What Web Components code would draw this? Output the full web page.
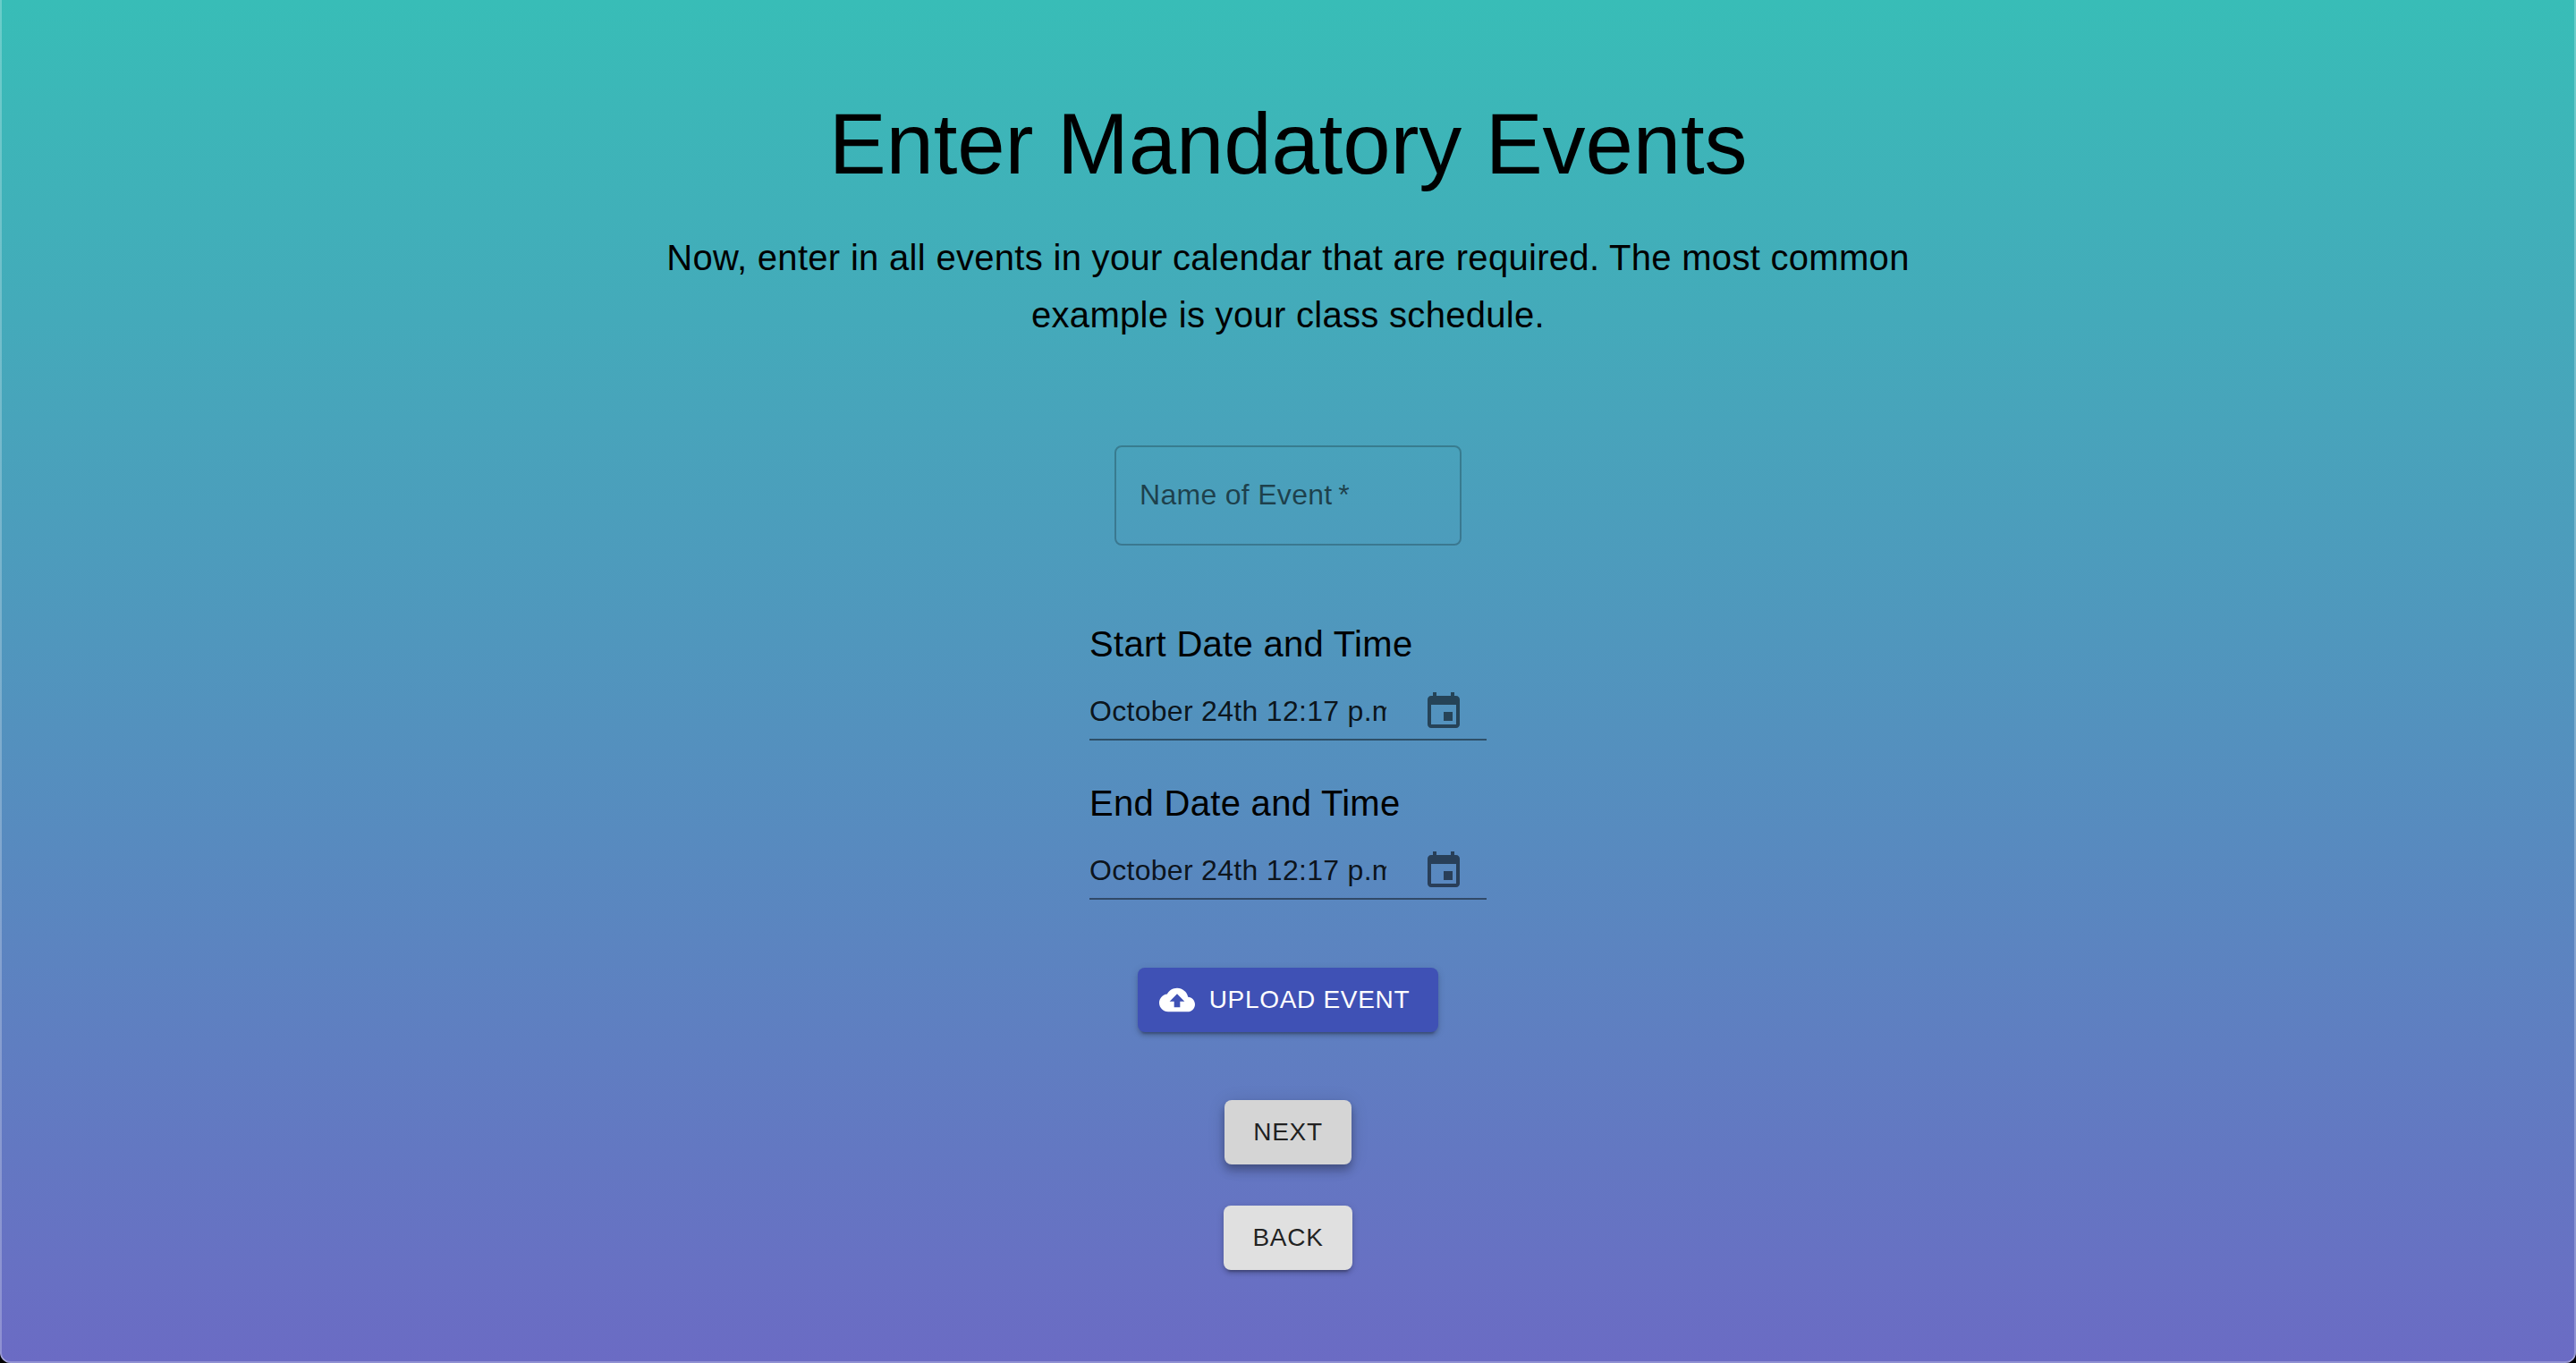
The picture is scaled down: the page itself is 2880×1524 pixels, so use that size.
<!DOCTYPE html>
<html lang="en">
<head>
<meta charset="utf-8">
<title>Enter Mandatory Events</title>
<style>
  html, body { margin: 0; height: 100%; background: #000; }
  body { font-family: "Liberation Sans", Arial, sans-serif; }
</style>
</head>
<body>
<app-page>
  <page-heading>
    <span slot="title">Enter Mandatory Events</span>
    Now, enter in all events in your calendar that are required. The most common<br>example is your class schedule.
  </page-heading>
  <text-field label="Name of Event"></text-field>
  <date-field value="October 24th 12:17 p.m.">Start Date and Time</date-field>
  <date-field class="end" value="October 24th 12:17 p.m.">End Date and Time</date-field>
  <ui-button class="upload" kind="primary"><cloud-icon slot="icon"></cloud-icon>Upload Event</ui-button>
  <ui-button class="next" kind="hover">Next</ui-button>
  <ui-button class="back">Back</ui-button>
</app-page>

<script>
class AppPage extends HTMLElement {
  constructor() {
    super();
    this.attachShadow({ mode: 'open' });
    this.shadowRoot.innerHTML = `
      <style>
        :host {
          display: block;
          height: 1524px;
          box-sizing: border-box;
          border-radius: 0 0 12px 12px;
          background: linear-gradient(180deg, #38bdb7 0%, #6b6bc4 100%);
          box-shadow: inset 2px 0 0 rgba(255,255,255,.25), inset -2px 0 0 rgba(255,255,255,.25), inset 0 -2px 0 rgba(255,255,255,.25);
        }
        main {
          display: flex;
          flex-direction: column;
          align-items: center;
          padding-top: 103px;
        }
        ::slotted(text-field) { margin-top: 114px; }
        ::slotted(date-field) { margin-top: 86px; }
        ::slotted(date-field.end) { margin-top: 46px; }
        ::slotted(ui-button.upload) { margin-top: 76px; }
        ::slotted(ui-button.next) { margin-top: 76px; }
        ::slotted(ui-button.back) { margin-top: 46px; }
      </style>
      <main><slot></slot></main>`;
  }
}

class PageHeading extends HTMLElement {
  constructor() {
    super();
    this.attachShadow({ mode: 'open' });
    this.shadowRoot.innerHTML = `
      <style>
        :host { display: block; text-align: center; color: #000; }
        h1 { margin: 0; font-size: 96px; line-height: 115px; font-weight: 400; letter-spacing: -.15px; }
        p { margin: 38px 0 0; font-size: 40px; line-height: 64px; letter-spacing: .3px; }
      </style>
      <h1><slot name="title"></slot></h1>
      <p><slot></slot></p>`;
  }
}

class TextField extends HTMLElement {
  constructor() {
    super();
    this.attachShadow({ mode: 'open' });
    this.shadowRoot.innerHTML = `
      <style>
        :host { display: block; width: 388px; height: 112px; box-sizing: border-box; }
        div {
          height: 100%;
          box-sizing: border-box;
          display: flex;
          align-items: center;
          padding: 0 26px 2px;
          border: 2px solid rgba(0,0,0,.23);
          border-radius: 8px;
          font-size: 32px;
          letter-spacing: .3px;
          color: rgba(0,0,0,.6);
        }
      </style>
      <div></div>`;
  }
  connectedCallback() {
    this.shadowRoot.querySelector('div').textContent = this.getAttribute('label') + '\u2009*';
  }
}

class DateField extends HTMLElement {
  constructor() {
    super();
    this.attachShadow({ mode: 'open' });
    this.shadowRoot.innerHTML = `
      <style>
        :host { display: block; width: 444px; color: #000; }
        h2 { margin: 0; font-size: 40px; line-height: 48px; font-weight: 400; letter-spacing: .3px; }
        .row {
          display: flex;
          align-items: flex-start;
          margin-top: 28px;
          padding-bottom: 6px;
          border-bottom: 2px solid rgba(0,0,0,.45);
        }
        .value {
          width: 332px;
          overflow: hidden;
          white-space: nowrap;
          font-size: 32px;
          line-height: 46px;
          letter-spacing: .3px;
          color: rgba(0,0,0,.87);
        }
        svg { display: block; width: 48px; height: 48px; margin-left: 40px; fill: rgba(0,0,0,.54); }
      </style>
      <h2><slot></slot></h2>
      <div class="row">
        <div class="value"></div>
        <svg viewBox="0 0 24 24"><path d="M17 12h-5v5h5v-5zM16 1v2H8V1H6v2H5c-1.11 0-1.99.9-1.99 2L3 19c0 1.1.89 2 2 2h14c1.1 0 2-.9 2-2V5c0-1.1-.9-2-2-2h-1V1h-2zm3 18H5V8h14v11z"/></svg>
      </div>`;
  }
  connectedCallback() {
    this.shadowRoot.querySelector('.value').textContent = this.getAttribute('value');
  }
}

class CloudIcon extends HTMLElement {
  constructor() {
    super();
    this.attachShadow({ mode: 'open' });
    this.shadowRoot.innerHTML = `
      <style>
        :host { display: block; width: 40px; height: 40px; }
        svg { display: block; width: 100%; height: 100%; fill: currentColor; }
      </style>
      <svg viewBox="0 0 24 24"><path d="M19.35 10.04C18.67 6.59 15.64 4 12 4 9.11 4 6.64 5.64 5.35 8.04 2.34 8.36 0 10.91 0 14c0 3.31 2.69 6 6 6h13c2.76 0 5-2.24 5-5 0-2.64-2.05-4.78-4.65-4.96zM14 13v4h-4v-4H7l5-5 5 5h-3z"/></svg>`;
  }
}

class UiButton extends HTMLElement {
  constructor() {
    super();
    this.attachShadow({ mode: 'open' });
    this.shadowRoot.innerHTML = `
      <style>
        :host { display: block; }
        button {
          display: flex;
          align-items: center;
          height: 72px;
          padding: 0 32px;
          border: 0;
          border-radius: 8px;
          font-family: inherit;
          font-size: 28px;
          letter-spacing: .7px;
          text-transform: uppercase;
          background: #e0e0e0;
          color: rgba(0,0,0,.87);
          box-shadow: 0 6px 2px -4px rgba(0,0,0,.2), 0 4px 4px 0 rgba(0,0,0,.14), 0 2px 10px 0 rgba(0,0,0,.12);
        }
        :host([kind=primary]) button { background: #3f51b5; color: #fff; }
        :host([kind=hover]) button { background: #d5d5d5; box-shadow: 0 4px 8px -2px rgba(0,0,0,.2), 0 8px 10px 1px rgba(0,0,0,.14), 0 2px 20px 0 rgba(0,0,0,.12); }
        ::slotted([slot=icon]) { margin: 0 16px 0 -8px; }
      </style>
      <button><slot name="icon"></slot><slot></slot></button>`;
  }
}

customElements.define('app-page', AppPage);
customElements.define('page-heading', PageHeading);
customElements.define('text-field', TextField);
customElements.define('date-field', DateField);
customElements.define('cloud-icon', CloudIcon);
customElements.define('ui-button', UiButton);
</script>
</body>
</html>
